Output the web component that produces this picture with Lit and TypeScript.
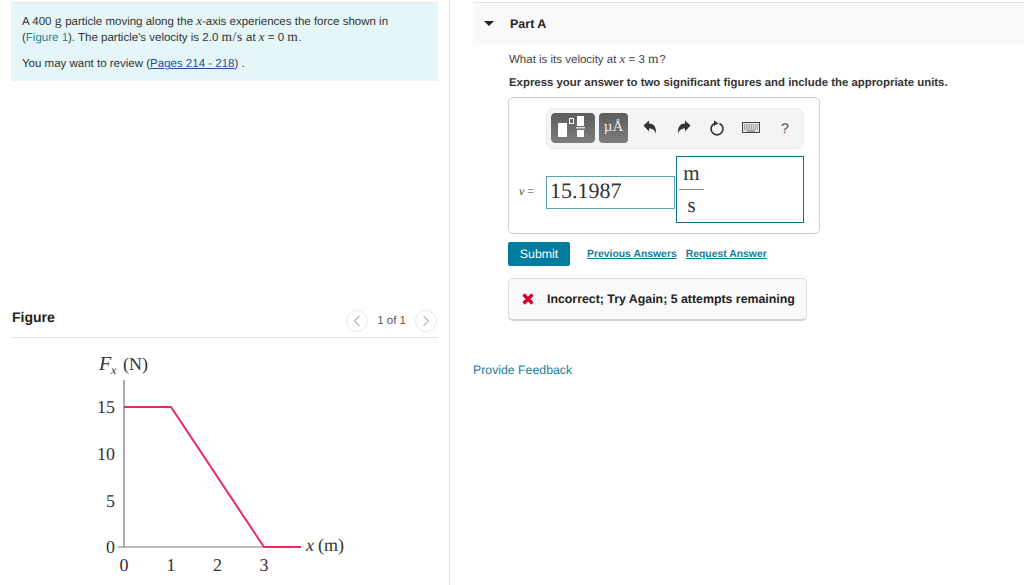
import { LitElement, html, css } from 'lit';
import { customElement } from 'lit/decorators.js';

@customElement('app-root')
export class AppRoot extends LitElement {
	static styles = css`
		:host {
			display: block;
			width: 1024px;
			height: 585px;
			overflow: hidden;
			background: #fff;
			font-family: 'Liberation Sans', Arial, sans-serif;
			text-rendering: geometricPrecision;
			color: #333;
		}
		.page {
			display: flex;
			height: 585px;
		}
		.left {
			box-sizing: border-box;
			width: 450px;
			height: 585px;
			padding: 2px 11px 0;
			border-right: 1px solid #ddd;
			flex: none;
		}
		.intro {
			box-sizing: border-box;
			height: 79px;
			padding: 11px 11px 0 11px;
			background: #e5f6f8;
			border-top: 1px solid #e6e9e9;
			font-size: 11.5px;
			line-height: 15px;
		}
		.intro p {
			margin: 0 0 11px;
		}
		.math {
			font-family: 'Liberation Serif', 'DejaVu Serif', serif;
			font-size: 13.5px;
			letter-spacing: 0.6px;
			line-height: 1;
		}
		.math-i {
			font-family: 'Liberation Serif', 'DejaVu Serif', serif;
			font-style: italic;
			font-size: 13px;
			line-height: 1;
		}
		.teal {
			color: #1c7f96;
		}
		.pages {
			color: #1f4f96;
			text-decoration: underline;
		}
		.fig-head {
			display: flex;
			justify-content: space-between;
			box-sizing: border-box;
			height: 30px;
			margin-top: 227px;
			padding-top: 2px;
			border-bottom: 1px solid #e2e2e2;
		}
		.fig-head h2 {
			margin: 0 0 0 1px;
			font-size: 14px;
			line-height: 15px;
			color: #222;
		}
		.pager {
			display: flex;
			align-items: center;
			height: 22px;
			gap: 9px;
			padding-right: 1px;
			font-size: 11.5px;
			color: #555;
		}
		.round {
			display: flex;
			align-items: center;
			justify-content: center;
			box-sizing: border-box;
			width: 22px;
			height: 22px;
			border: 1px solid #e8e8e8;
			border-radius: 50%;
		}
		.graph {
			display: block;
			margin: 7px 0 0 49px;
		}
		.graph text {
			font-family: 'Liberation Serif', serif;
			font-size: 18px;
			fill: #333;
		}
		.right {
			flex: 1;
			padding: 2px 0 0 23px;
		}
		.part {
			display: flex;
			align-items: center;
			box-sizing: border-box;
			height: 42px;
			padding-left: 11px;
			background: #f9f9f9;
			border-top: 1px solid #e6e6e6;
			font-size: 12.5px;
			font-weight: bold;
			color: #222;
		}
		.part .caret {
			width: 0;
			height: 0;
			margin-right: 16px;
			border-left: 5px solid transparent;
			border-right: 5px solid transparent;
			border-top: 5px solid #222;
		}
		.body {
			padding: 8px 0 0 35px;
		}
		.q {
			margin: 0 0 0 1px;
			font-size: 11.5px;
			line-height: 15px;
			color: #444;
		}
		.hint {
			margin: 8px 0 0 1px;
			font-size: 11.4px;
			font-weight: bold;
			line-height: 15px;
			color: #333;
		}
		.answer {
			box-sizing: border-box;
			width: 312px;
			height: 137px;
			margin-top: 6px;
			padding: 10px 0 0 37px;
			border: 1px solid #ccc;
			border-radius: 5px;
		}
		.toolbar {
			display: flex;
			align-items: center;
			box-sizing: border-box;
			width: 258px;
			height: 41px;
			padding: 0 0 2px 4px;
			background: #f4f4f4;
			border: 1px solid #ebebeb;
			border-radius: 7px;
		}
		.tpl {
			display: block;
			flex: none;
			width: 44px;
			height: 30px;
			border-radius: 4px;
		}
		.mu {
			display: flex;
			align-items: center;
			justify-content: center;
			flex: none;
			width: 29px;
			height: 30px;
			margin-left: 4px;
			border-radius: 4px;
			background: linear-gradient(#5d5d5d, #7d7d7d);
			color: #ececec;
			font-family: 'Liberation Serif', serif;
			font-size: 15px;
		}
		.tools {
			display: flex;
			align-items: center;
			margin-left: 15px;
		}
		.tools svg {
			display: block;
		}
		.redo {
			margin-left: 20px;
		}
		.reload {
			margin-left: 18px;
		}
		.keys {
			margin-left: 17px;
		}
		.help {
			margin-left: 21px;
			font-size: 14px;
			color: #444;
		}
		.entry {
			display: flex;
			align-items: center;
			margin: 7px 0 0 -27px;
		}
		.vlabel {
			width: 27px;
			margin-top: 4px;
			font-family: 'Liberation Serif', serif;
			font-size: 12px;
			color: #444;
		}
		.value {
			box-sizing: border-box;
			width: 129px;
			height: 33px;
			margin-top: 6px;
			padding: 0 0 0 3px;
			border: 1px solid #5f9fac;
			font-family: 'Liberation Serif', serif;
			font-size: 22px;
			line-height: 27px;
			color: #333;
		}
		.unit {
			box-sizing: border-box;
			width: 128px;
			height: 67px;
			margin-left: 1px;
			padding: 5px 0 0 2px;
			border: 1px solid #0f7285;
			font-family: 'Liberation Serif', serif;
			font-size: 21px;
			color: #333;
		}
		.frac {
			display: flex;
			flex-direction: column;
			align-items: center;
			width: 25px;
		}
		.frac .top {
			width: 25px;
			height: 27px;
			line-height: 23px;
			text-align: center;
			border-bottom: 1px solid #888;
		}
		.frac .bot {
			line-height: 30px;
		}
		.actions {
			display: flex;
			align-items: center;
			margin-top: 8px;
		}
		.submit {
			box-sizing: border-box;
			width: 62px;
			height: 24px;
			line-height: 24px;
			text-align: center;
			background: #007c9c;
			border-radius: 2px;
			color: #fff;
			font-size: 12.3px;
		}
		.link {
			color: #1a7c97;
			font-size: 10.4px;
			font-weight: bold;
			text-decoration: underline;
		}
		.link.first {
			margin: 0 9px 0 17px;
		}
		.result {
			display: flex;
			align-items: center;
			box-sizing: border-box;
			width: 299px;
			height: 43px;
			margin-top: 12px;
			padding-left: 13px;
			background: #f9f9f9;
			border: 1px solid #ddd;
			border-bottom: 2px solid #d4d4d4;
			border-radius: 5px;
			font-size: 12.35px;
			font-weight: bold;
			color: #222;
		}
		.result svg {
			margin-right: 13px;
		}
		.feedback {
			display: block;
			margin-top: 42px;
			font-size: 12.3px;
			line-height: 14px;
			color: #1a7c97;
		}
	`;

	render() {
		return html`
			<div class="page">
				<section class="left">
					<div class="intro">
						<p>
							A 400 <span class="math">g</span> particle moving along the
							<span class="math-i">x</span>-axis experiences the force shown in<br />
							(<span class="teal">Figure 1</span>). The particle's velocity is 2.0
							<span class="math">m/s</span> at <span class="math-i">x</span> = 0
							<span class="math">m</span>.
						</p>
						<p>You may want to review (<span class="pages">Pages 214 - 218</span>) .</p>
					</div>
					<div class="fig-head">
						<h2>Figure</h2>
						<div class="pager">
							<span class="round">
								<svg width="8" height="12" viewBox="0 0 8 12"><path d="M6.500 1 1.500 6l5 5" fill="none" stroke="#bbb" stroke-width="1.200" /></svg>
							</span>
							<span>1 of 1</span>
							<span class="round">
								<svg width="8" height="12" viewBox="0 0 8 12"><path d="M1.500 1l5 5-5 5" fill="none" stroke="#bbb" stroke-width="1.200" /></svg>
							</span>
						</div>
					</div>
					${this.renderGraph()}
				</section>
				<section class="right">
					<div class="part">
						<i class="caret"></i>
						<span>Part A</span>
					</div>
					<div class="body">
						<p class="q">
							What is its velocity at <span class="math-i">x</span> = 3
							<span class="math">m</span>?
						</p>
						<p class="hint">Express your answer to two significant figures and include the appropriate units.</p>
						<div class="answer">
							${this.renderToolbar()}
							<div class="entry">
								<span class="vlabel"><i>v</i> =</span>
								<div class="value">15.1987</div>
								<div class="unit">
									<div class="frac">
										<span class="top">m</span>
										<span class="bot">s</span>
									</div>
								</div>
							</div>
						</div>
						<div class="actions">
							<span class="submit">Submit</span>
							<span class="link first">Previous Answers</span>
							<span class="link">Request Answer</span>
						</div>
						<div class="result">
							<svg width="12" height="12" viewBox="0 0 12 12"><path d="M1.500 1.500l9 9M10.500 1.500l-9 9" stroke="#d4002a" stroke-width="3.200" /></svg>
							<span>Incorrect; Try Again; 5 attempts remaining</span>
						</div>
					</div>
					<span class="feedback">Provide Feedback</span>
				</section>
			</div>
		`;
	}

	renderToolbar() {
		return html`
			<div class="toolbar">
				<svg class="tpl" viewBox="0 0 44 30">
					<defs>
						<linearGradient id="tplbg" x1="0" y1="0" x2="0" y2="1">
							<stop offset="0" stop-color="#5d5d5d" />
							<stop offset="1" stop-color="#7d7d7d" />
						</linearGradient>
					</defs>
					<rect width="44" height="30" rx="4" fill="url(#tplbg)" />
					<rect x="7" y="10" width="9" height="14" fill="#fff" />
					<rect x="18.500" y="5.500" width="4" height="5" fill="none" stroke="#fff" />
					<rect x="26" y="3" width="7" height="10" fill="#fff" />
					<rect x="25" y="14" width="9" height="1.500" fill="#ddd" />
					<rect x="26" y="17" width="7" height="7" fill="#fff" />
				</svg>
				<span class="mu">µÅ</span>
				<div class="tools">
					<svg width="14" height="15" viewBox="0 0 14 15"><path d="M.5 5.500 6 .5v3c4.500 0 7.500 3 7 10.500-1-4-3.500-5.500-7-5.500v3z" fill="#333" /></svg>
					<svg class="redo" width="14" height="15" viewBox="0 0 14 15"><path d="M13.500 5.500 8 .5v3c-4.500 0-7.500 3-7 10.500 1-4 3.500-5.500 7-5.500v3z" fill="#333" /></svg>
					<svg class="reload" width="16" height="16" viewBox="0 0 16 16"><path d="M10.500 3.400A6 6 0 1 1 5.500 3.400" fill="none" stroke="#333" stroke-width="1.600" /><path d="M5 .5 9.500 3.200 5 6z" fill="#333" /></svg>
					<svg class="keys" width="18" height="11" viewBox="0 0 18 11"><rect x=".5" y=".5" width="17" height="10" fill="#e4e4e4" stroke="#444" /><path d="M2 3h14M2 5h14M2 7h14" stroke="#777" stroke-dasharray="1.500 .7" /><path d="M5 9h8" stroke="#666" /></svg>
					<span class="help">?</span>
				</div>
			</div>
		`;
	}

	renderGraph() {
		// graph coordinates: svg origin is at page (60, 345)
		const ticksY = [62, 109, 156];
		const ticksX = [111, 158, 204];
		return html`
			<svg class="graph" width="300" height="240" viewBox="0 0 300 240">
				<path d="M64 35V202H241" fill="none" stroke="#777" stroke-width="1.200" />
				${ticksY.map((y) => html`<path d="M58 ${y}H64" stroke="#777" />`)}
				<path d="M58 202H64" stroke="#777" />
				${ticksX.map((x) => html`<path d="M${x} 197V202" stroke="#777" />`)}
				<path d="M64 62H111L204 202H241" fill="none" stroke="#ea2a5c" stroke-width="2" />
				<text x="39" y="25" font-style="italic" style="font-size:20px">F</text>
				<text x="51" y="29" font-style="italic" style="font-size:12px">x</text>
				<text x="63" y="25">(N)</text>
				<text x="37" y="68">15</text>
				<text x="37" y="115">10</text>
				<text x="46" y="162">5</text>
				<text x="46" y="208">0</text>
				<text x="59.500" y="226">0</text>
				<text x="106.500" y="226">1</text>
				<text x="153" y="226">2</text>
				<text x="199.500" y="226">3</text>
				<text x="246" y="206" font-style="italic">x</text>
				<text x="258" y="206">(m)</text>
			</svg>
		`;
	}
}
